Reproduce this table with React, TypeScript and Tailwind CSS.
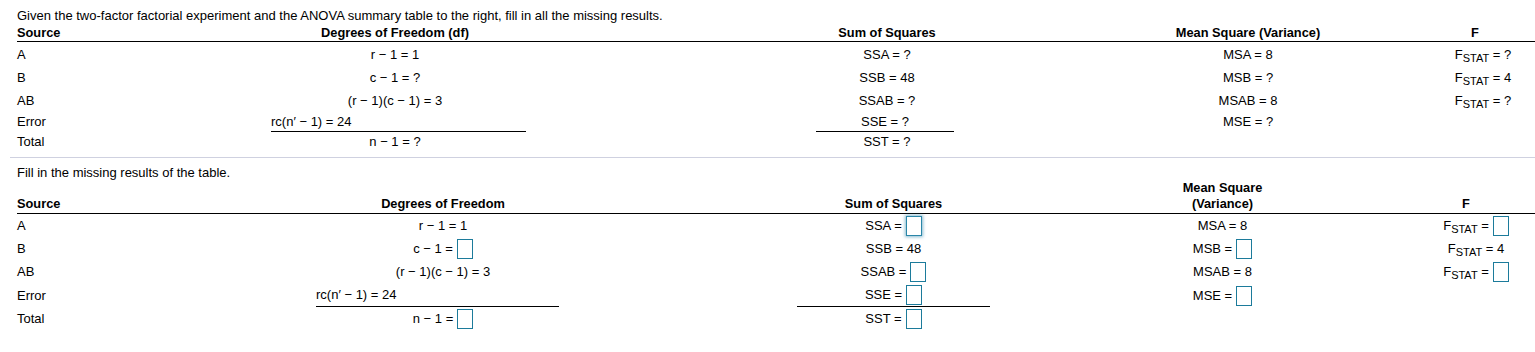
import React from "react";

const Box = ({ focus = false }: { focus?: boolean }) => (
  <span
    className={
      "ml-[4px] inline-block h-[20px] w-[16px] border bg-white align-middle " +
      (focus
        ? "border-[#2a86a8] shadow-[0_0_3px_1px_rgba(40,130,170,0.55)]"
        : "border-[#1c7b9b]")
    }
  />
);

const Sub = () => (
  <sub className="text-[11px] leading-none relative top-[3px] align-baseline">STAT</sub>
);

export default function App() {
  return (
    <div
      className="w-[1535px] h-[352px] bg-white text-black text-[13px] leading-[14px] overflow-hidden"
      style={{ fontFamily: '"Liberation Sans", Arial, sans-serif' }}
    >
      {/* ---------- Table 1 ---------- */}
      <div className="pl-[17px] pt-[9px]">
        <div className="h-[14px]">
          Given the two-factor factorial experiment and the ANOVA summary table to the right, fill in all the missing results.
        </div>
        <div className="mt-[3px] flex pb-[1px] border-b border-black font-bold text-[12.8px]">
          <div className="w-[247px]">Source</div>
          <div className="w-[262px] text-center">Degrees of Freedom (df)</div>
          <div className="ml-[290px] w-[142px] text-center">Sum of Squares</div>
          <div className="ml-[142px] w-[296px] text-center">Mean Square (Variance)</div>
          <div className="ml-[19px] w-[120px] text-center">F</div>
        </div>
        {[
          { s: "A", df: "r − 1 = 1", ss: "SSA = ?", ms: "MSA = 8", f: "?" },
          { s: "B", df: "c − 1 = ?", ss: "SSB = 48", ms: "MSB = ?", f: "4" },
          { s: "AB", df: "(r − 1)(c − 1) = 3", ss: "SSAB = ?", ms: "MSAB = 8", f: "?" },
        ].map((r, i) => (
          <div key={r.s} className={"flex h-[23px] items-center " + (i === 0 ? "mt-[1px]" : "")}>
            <div className="w-[247px]">{r.s}</div>
            <div className="w-[262px] text-center">{r.df}</div>
            <div className="ml-[290px] w-[142px] text-center">{r.ss}</div>
            <div className="ml-[142px] w-[296px] text-center">{r.ms}</div>
            <div className="ml-[19px] w-[120px] pl-[16px] text-center">
              F<Sub /> = {r.f}
            </div>
          </div>
        ))}
        <div className="flex h-[20px]">
          <div className="w-[247px] flex items-center">Error</div>
          <div className="w-[262px] pl-[7px]">
            <div className="h-[20px] flex items-center border-b border-black">rc(n′ − 1) = 24</div>
          </div>
          <div className="ml-[290px] w-[142px] pr-[4px]">
            <div className="h-[20px] flex items-center justify-center border-b border-black">SSE = ?</div>
          </div>
          <div className="ml-[142px] w-[296px] flex items-center justify-center">MSE = ?</div>
        </div>
        <div className="flex h-[19px] items-center">
          <div className="w-[247px]">Total</div>
          <div className="w-[262px] text-center">n − 1 = ?</div>
          <div className="ml-[290px] w-[142px] text-center">SST = ?</div>
        </div>
      </div>

      <div className="ml-[10px] mt-[6px] h-px bg-[#cfd1e0]" />

      {/* ---------- Table 2 ---------- */}
      <div className="pl-[17px] pt-[8px]">
        <div className="h-[14px]">Fill in the missing results of the table.</div>
        <div className="flex items-end pb-[1px] border-b border-black font-bold text-[12.8px] leading-[16px]">
          <div className="w-[299px]">Source</div>
          <div className="w-[254px] text-center">Degrees of Freedom</div>
          <div className="ml-[227px] w-[193px] text-center">Sum of Squares</div>
          <div className="ml-[110px] w-[245px] text-center">
            <div>Mean Square</div>
            <div>(Variance)</div>
          </div>
          <div className="ml-[61px] w-[120px] text-center">F</div>
        </div>

        {/* A */}
        <div className="flex h-[23px] items-center">
          <div className="w-[299px]">A</div>
          <div className="w-[254px] text-center">r − 1 = 1</div>
          <div className="ml-[227px] w-[193px] flex justify-center items-center">
            SSA =<Box focus />
          </div>
          <div className="ml-[110px] w-[245px] text-center">MSA = 8</div>
          <div className="ml-[61px] w-[120px] pl-[20px] flex justify-center items-center">
            <span>
              F<Sub /> =
            </span>
            <Box />
          </div>
        </div>
        {/* B */}
        <div className="flex h-[23px] items-center">
          <div className="w-[299px]">B</div>
          <div className="w-[254px] flex justify-center items-center">
            c − 1 =<Box />
          </div>
          <div className="ml-[227px] w-[193px] text-center">SSB = 48</div>
          <div className="ml-[110px] w-[245px] flex justify-center items-center">
            MSB =<Box />
          </div>
          <div className="ml-[61px] w-[120px] pl-[20px] text-center">
            F<Sub /> = 4
          </div>
        </div>
        {/* AB */}
        <div className="flex h-[24px] items-center">
          <div className="w-[299px]">AB</div>
          <div className="w-[254px] text-center">(r − 1)(c − 1) = 3</div>
          <div className="ml-[227px] w-[193px] flex justify-center items-center">
            SSAB =<Box />
          </div>
          <div className="ml-[110px] w-[245px] text-center">MSAB = 8</div>
          <div className="ml-[61px] w-[120px] pl-[20px] flex justify-center items-center">
            <span>
              F<Sub /> =
            </span>
            <Box />
          </div>
        </div>
        {/* Error */}
        <div className="flex h-[23px]">
          <div className="w-[299px] flex items-center">Error</div>
          <div className="w-[254px] pr-[11px]">
            <div className="h-[23px] flex items-center border-b border-black">rc(n′ − 1) = 24</div>
          </div>
          <div className="ml-[227px] w-[193px]">
            <div className="h-[23px] flex items-center justify-center border-b border-black">
              SSE =<Box />
            </div>
          </div>
          <div className="ml-[110px] w-[245px] flex justify-center items-center">
            MSE =<Box />
          </div>
        </div>
        {/* Total */}
        <div className="flex h-[23px] items-center">
          <div className="w-[299px]">Total</div>
          <div className="w-[254px] flex justify-center items-center">
            n − 1 =<Box />
          </div>
          <div className="ml-[227px] w-[193px] flex justify-center items-center">
            SST =<Box />
          </div>
        </div>
      </div>
    </div>
  );
}
